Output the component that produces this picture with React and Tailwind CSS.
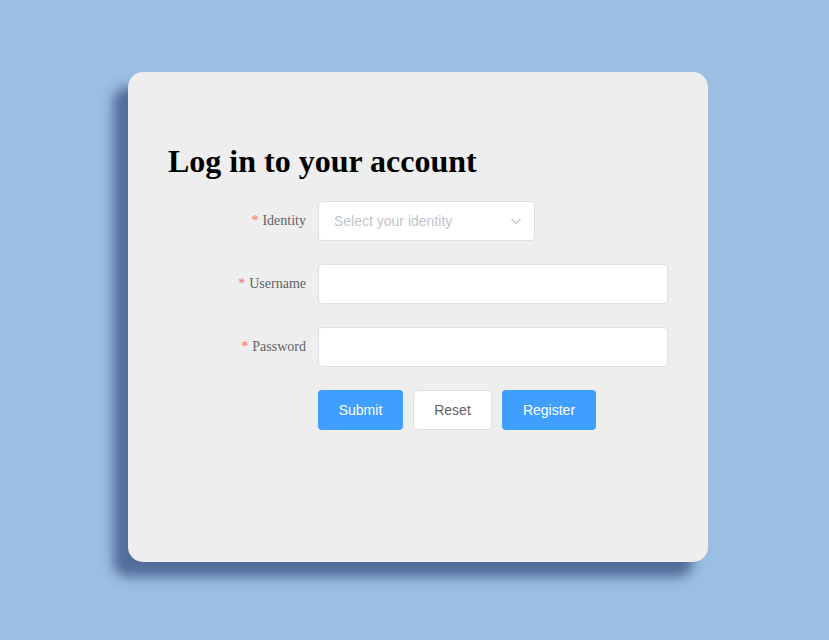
import React from 'react'

const Label = ({ children }) => (
  <label className="w-[150px] shrink-0 pr-3 text-right text-[14px] leading-[40px] text-[#606266] font-['Liberation_Serif',serif]">
    <span className="mr-1 text-[#f56c6c]">*</span>
    {children}
  </label>
)

const App = () => {
  return (
    <div className="min-h-[640px] w-full bg-[#9abfe2] pt-[72px] pl-[128px] font-['Liberation_Sans',Arial,sans-serif]">
      <div className="w-[580px] h-[490px] rounded-[15px] bg-[#eeeeee] pt-[71px] px-10 shadow-[-15px_15px_12px_rgba(60,80,130,0.75)]">
        <h1 className="text-[32px] leading-[36px] font-bold text-black font-['Liberation_Serif','Times_New_Roman',serif] mb-[22px]">
          Log in to your account
        </h1>

        <form onSubmit={e => e.preventDefault()}>
          {/* Identity */}
          <div className="flex mb-[23px]">
            <Label>Identity</Label>
            <div className="relative w-[217px] h-10 rounded bg-white border border-[#dcdfe6] flex items-center pl-[15px] pr-3">
              <span className="flex-1 text-[14px] text-[#c0c4cc]">Select your identity</span>
              <svg width="12" height="12" viewBox="0 0 12 12" fill="none" className="text-[#c0c4cc]">
                <path d="M1.5 4l4.5 4.5L10.5 4" stroke="currentColor" strokeWidth="1.2" />
              </svg>
            </div>
          </div>

          {/* Username */}
          <div className="flex mb-[23px]">
            <Label>Username</Label>
            <input className="w-[350px] h-10 rounded bg-white border border-[#dcdfe6] px-[15px] text-[14px] outline-none" />
          </div>

          {/* Password */}
          <div className="flex mb-[23px]">
            <Label>Password</Label>
            <input type="password" className="w-[350px] h-10 rounded bg-white border border-[#dcdfe6] px-[15px] text-[14px] outline-none" />
          </div>

          {/* Buttons */}
          <div className="flex pl-[150px] gap-[10px]">
            <button className="h-10 w-[85px] rounded bg-[#409eff] text-white text-[14px]">Submit</button>
            <button className="h-10 w-[79px] rounded bg-white border border-[#dcdfe6] text-[#606266] text-[14px]">Reset</button>
            <button className="h-10 w-[94px] rounded bg-[#409eff] text-white text-[14px]">Register</button>
          </div>
        </form>
      </div>
    </div>
  )
}

export default App
